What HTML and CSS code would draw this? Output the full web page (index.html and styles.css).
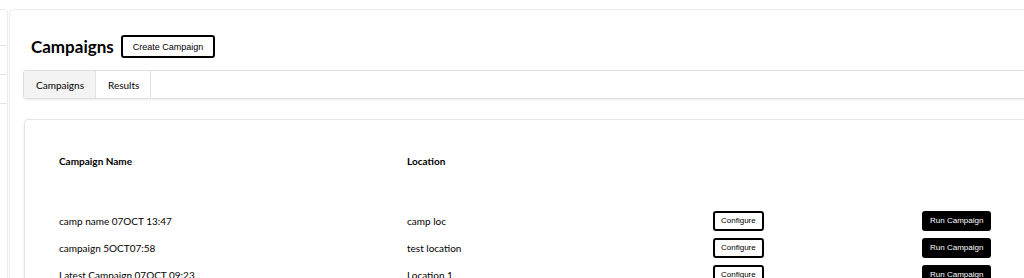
FILE: index.html
```html
<!DOCTYPE html>
<html>
<head>
<meta charset="utf-8">
<link rel="stylesheet" href="styles.css">
</head>
<body>
<aside class="sidebar">
  <div class="side-item"></div>
  <div class="side-item"></div>
  <div class="side-item"></div>
</aside>
<main class="main">
  <div class="title-row">
    <h1 class="title">Campaigns</h1>
    <button class="btn btn-outline btn-create">Create Campaign</button>
  </div>
  <nav class="tabs">
    <div class="tab active">Campaigns</div>
    <div class="tab">Results</div>
  </nav>
  <section class="card">
    <div class="row head">
      <div>Campaign Name</div>
      <div>Location</div>
      <div></div>
      <div></div>
    </div>
    <div class="row">
      <div>camp name 07OCT 13:47</div>
      <div>camp loc</div>
      <div><button class="btn btn-outline btn-sm">Configure</button></div>
      <div><button class="btn btn-dark btn-sm">Run Campaign</button></div>
    </div>
    <div class="row">
      <div>campaign 5OCT07:58</div>
      <div>test location</div>
      <div><button class="btn btn-outline btn-sm">Configure</button></div>
      <div><button class="btn btn-dark btn-sm">Run Campaign</button></div>
    </div>
    <div class="row">
      <div>Latest Campaign 07OCT 09:23</div>
      <div>Location 1</div>
      <div><button class="btn btn-outline btn-sm">Configure</button></div>
      <div><button class="btn btn-dark btn-sm">Run Campaign</button></div>
    </div>
  </section>
</main>
</body>
</html>
```
FILE: styles.css
```css
html, body {
  margin: 0;
  padding: 0;
  background: #fff;
}
body {
  display: flex;
  height: 278px;
  overflow: hidden;
  font-family: Lato, "Liberation Sans", sans-serif;
  color: #000;
}
.sidebar {
  flex: 0 0 8px;
  margin-top: 9px;
  padding-top: 35px;
  border-top: 1px solid #ececec;
  border-right: 1px solid #ececec;
  border-top-right-radius: 4px;
  box-sizing: border-box;
}
.side-item {
  height: 28px;
  border-top: 1px solid #e4e4e4;
}
.main {
  flex: 0 0 1040px;
  margin-left: 1px;
  margin-top: 9px;
  padding: 25px 0 0 13px;
  border-top: 1px solid #ececec;
  border-left: 1px solid #ececec;
  border-top-left-radius: 5px;
  box-sizing: border-box;
}
.title-row {
  display: flex;
  align-items: center;
  height: 23px;
  padding-left: 8px;
}
.title {
  margin: 0 7px 0 0;
  font-size: 17px;
  font-weight: 700;
  line-height: 23px;
}
.btn {
  font-family: "Liberation Sans", Arial, sans-serif;
  font-size: 9px;
  border-radius: 3px;
  box-sizing: border-box;
  cursor: pointer;
}
.btn-outline {
  background: #fff;
  color: #000;
  border: 2px solid #000;
}
.btn-dark {
  background: #000;
  color: #fff;
  border: 2px solid #000;
}
.btn-create {
  height: 23px;
  padding: 0 10px;
}
.btn-sm {
  height: 20px;
  padding: 0 6px;
  font-size: 8px;
}
.tabs {
  display: flex;
  margin-top: 12px;
  height: 29px;
  border: 1px solid #dedede;
  border-radius: 3px;
  box-shadow: 0 1px 2px rgba(0, 0, 0, 0.08);
  box-sizing: border-box;
  overflow: hidden;
}
.tab {
  display: flex;
  align-items: center;
  padding: 0 11px 0 12px;
  font-size: 10px;
  border-right: 1px solid #e2e2e2;
}
.tab.active {
  background: #f3f3f3;
}
.card {
  margin: 20px 0 0 1px;
  padding: 30px 0 0 34px;
  border: 1px solid #e4e4e4;
  border-radius: 4px;
  box-shadow: 0 1px 3px rgba(0, 0, 0, 0.08);
  height: 200px;
  box-sizing: border-box;
}
.row {
  display: grid;
  grid-template-columns: 348px 306px 209px 100px;
  align-items: center;
  height: 27px;
  font-size: 10px;
}
.row.head {
  height: 21px;
  margin-bottom: 36px;
  font-weight: 700;
}
.row > div {
  display: flex;
  align-items: center;
}
```
